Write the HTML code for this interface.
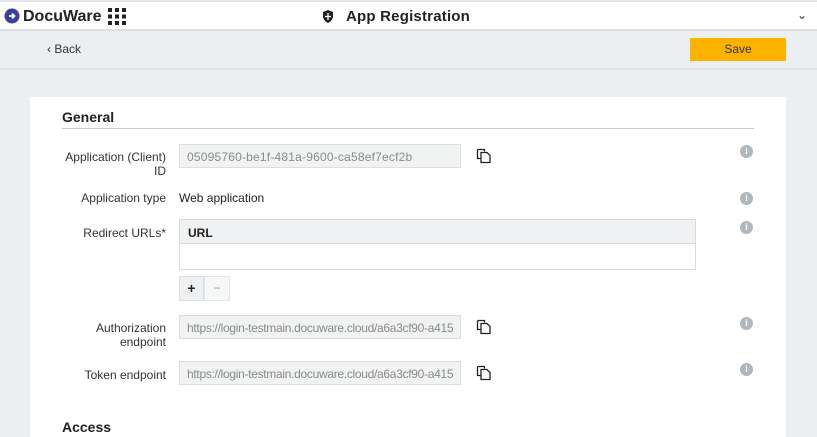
<!DOCTYPE html>
<html><head><style>
body{margin:0;width:817px;height:432px;overflow:hidden;background:#eceff1;font-family:"Liberation Sans",sans-serif;font-size:12px;color:#222;position:relative}
.a{position:absolute}
.hdr{left:0;top:0;width:817px;height:31px;background:#fff;border-top:2px solid #e3e5e7;border-bottom:2px solid #dde0e3;box-sizing:border-box}
.tb{left:0;top:31px;width:817px;height:39px;background:#eceff1;border-bottom:2px solid #e0e3e5;box-sizing:border-box}
.card{left:30px;top:97px;width:756px;height:340px;background:#fff}
.lbl{text-align:right;width:140px;left:26px;color:#333}
.inp{left:179px;width:282px;height:24px;background:#f1f3f2;border:1px solid #dcdedd;box-sizing:border-box;color:#8a8a8a;padding:5px 7px;white-space:nowrap;overflow:hidden;letter-spacing:-0.15px}
.info{width:13px;height:13px;border-radius:50%;background:#b0b7bd;color:#fff;font-size:9px;font-weight:bold;text-align:center;line-height:13px;left:740px}
</style></head><body>
<div class="a hdr"></div>
<svg class="a" style="left:4px;top:8px" width="16" height="16" viewBox="0 0 16 16"><circle cx="8" cy="8" r="7.5" fill="#3a3f9e"/><path d="M5 8h5M8 5.5l2.5 2.5-2.5 2.5" stroke="#fff" stroke-width="1.8" fill="none"/></svg>
<div class="a" style="left:23px;top:8px;font-size:16px;font-weight:bold;color:#222">DocuWare</div>
<svg class="a" style="left:108px;top:8px" width="18" height="17"><g fill="#222"><rect x="0" y="0" width="4" height="4"/><rect x="7" y="0" width="4" height="4"/><rect x="14" y="0" width="4" height="4"/><rect x="0" y="6.5" width="4" height="4"/><rect x="7" y="6.5" width="4" height="4"/><rect x="14" y="6.5" width="4" height="4"/><rect x="0" y="13" width="4" height="4"/><rect x="7" y="13" width="4" height="4"/><rect x="14" y="13" width="4" height="4"/></g></svg>
<svg class="a" style="left:322px;top:10px" width="12" height="13" viewBox="0 0 12 13"><path d="M6 0L11 2v4c0 3-2 5.5-5 7C3 11.5 1 9 1 6V2z" fill="#222"/><path d="M6 3v7M3 6.5h6" stroke="#fff" stroke-width="1.3"/></svg>
<div class="a" style="left:346px;top:8px;font-size:15px;font-weight:bold;color:#222;letter-spacing:0.2px">App Registration</div>
<div class="a" style="left:797px;top:8px;font-size:12px;color:#333">&#8964;</div>
<div class="a tb"></div>
<div class="a" style="left:47px;top:42px;color:#333">‹ Back</div>
<div class="a" style="left:690px;top:38px;width:96px;height:23px;background:#fdb200;color:#333;text-align:center;line-height:23px">Save</div>
<div class="a card"></div>
<div class="a" style="left:62px;top:109px;font-size:14px;font-weight:bold;color:#222">General</div>
<div class="a" style="left:62px;top:128px;width:692px;height:1px;background:#c9ccce"></div>
<div class="a lbl" style="top:150px;line-height:14px">Application (Client)<br>ID</div>
<div class="a inp" style="top:144px;letter-spacing:0.2px">05095760-be1f-481a-9600-ca58ef7ecf2b</div>
<div class="a lbl" style="top:191px">Application type</div>
<div class="a" style="left:179px;top:191px;color:#222">Web application</div>
<div class="a lbl" style="top:226px">Redirect URLs*</div>
<div class="a" style="left:179px;top:219px;width:517px;height:51px;border:1px solid #d8dbdd;box-sizing:border-box"><div style="height:24px;background:#eef0f1;border-bottom:1px solid #d8dbdd;font-weight:bold;padding:6px 0 0 8px;box-sizing:border-box">URL</div></div>
<div class="a" style="left:179px;top:276px;width:25px;height:25px;background:#eef0f1;border:1px solid #dcdfe1;box-sizing:border-box;text-align:center;line-height:23px;font-weight:bold;font-size:14px">+</div>
<div class="a" style="left:204px;top:276px;width:26px;height:25px;background:#f6f7f8;border:1px solid #e4e6e8;box-sizing:border-box;text-align:center;line-height:23px;color:#999">−</div>
<div class="a lbl" style="top:321px;line-height:14px">Authorization<br>endpoint</div>
<div class="a inp" style="top:315px;letter-spacing:-0.3px">https://login-testmain.docuware.cloud/a6a3cf90-a415</div>
<div class="a lbl" style="top:368px">Token endpoint</div>
<div class="a inp" style="top:361px;letter-spacing:-0.3px">https://login-testmain.docuware.cloud/a6a3cf90-a415</div>
<svg class="a" style="left:476px;top:148px" width="16" height="16"><path d="M1.5 1.5h7v2M1.5 1.5v9h3" fill="none" stroke="#222" stroke-width="1.3"/><path d="M5 4.5h6l3 3v7H5z" fill="#fff" stroke="#222" stroke-width="1.3"/></svg>
<svg class="a" style="left:476px;top:319px" width="16" height="16"><path d="M1.5 1.5h7v2M1.5 1.5v9h3" fill="none" stroke="#222" stroke-width="1.3"/><path d="M5 4.5h6l3 3v7H5z" fill="#fff" stroke="#222" stroke-width="1.3"/></svg>
<svg class="a" style="left:476px;top:365px" width="16" height="16"><path d="M1.5 1.5h7v2M1.5 1.5v9h3" fill="none" stroke="#222" stroke-width="1.3"/><path d="M5 4.5h6l3 3v7H5z" fill="#fff" stroke="#222" stroke-width="1.3"/></svg>
<div class="a info" style="top:145px">i</div>
<div class="a info" style="top:192px">i</div>
<div class="a info" style="top:221px">i</div>
<div class="a info" style="top:317px">i</div>
<div class="a info" style="top:363px">i</div>
<div class="a" style="left:62px;top:419px;font-size:14px;font-weight:bold;color:#222">Access</div>
</body></html>
